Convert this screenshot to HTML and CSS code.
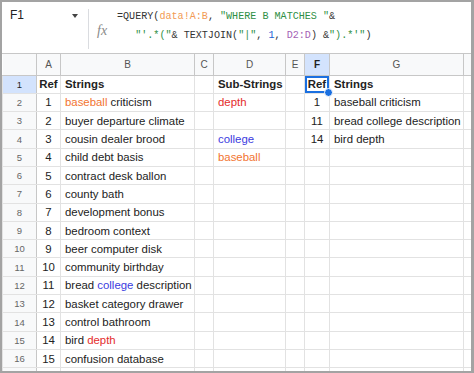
FILE: index.html
```html
<!DOCTYPE html>
<html lang="en">

<head>
    <meta charset="UTF-8">
    <meta name="viewport" content="width=device-width, initial-scale=1.0">
    <title>QUERY matches</title>
    <link rel="stylesheet" href="styles.css">
</head>

<body>
    <div class="frame">
        <div class="sheet">
            <div class="formula-bar">
                <div class="name-box">
                    <span class="cell-ref">F1</span>
                    <span class="caret"></span>
                </div>
                <div class="divider"></div>
                <div class="fx">fx</div>
<pre class="formula">=QUERY(<span class="rng1">data!A:B</span>, <span class="str">"WHERE B MATCHES "</span>&amp;
   <span class="str">"'.*("</span>&amp; TEXTJOIN(<span class="str">"|"</span>, <span class="num">1</span>, <span class="rng2">D2:D</span>) &amp;<span class="str">").*'"</span>)</pre>
            </div>

            <table class="grid">
                <colgroup>
                    <col class="w-head">
                    <col class="w-a">
                    <col class="w-b">
                    <col class="w-c">
                    <col class="w-d">
                    <col class="w-e">
                    <col class="w-f">
                    <col class="w-g">
                    <col class="w-h">
                </colgroup>
                <tr class="col-heads">
                    <th class="corner"></th>
                    <th>A</th>
                    <th>B</th>
                    <th>C</th>
                    <th>D</th>
                    <th>E</th>
                    <th class="active">F</th>
                    <th>G</th>
                    <th></th>
                </tr>
                <tr>
                    <th class="row-num active">1</th>
                    <td class="num-cell bold">Ref</td>
                    <td class="bold">Strings</td>
                    <td></td>
                    <td class="bold">Sub-Strings</td>
                    <td></td>
                    <td class="num-cell bold selected">Ref</td>
                    <td class="bold">Strings</td>
                    <td></td>
                </tr>
                <tr>
                    <th class="row-num">2</th>
                    <td class="num-cell">1</td>
                    <td><span class="orange">baseball</span> criticism</td>
                    <td></td>
                    <td><span class="red">depth</span></td>
                    <td></td>
                    <td class="num-cell">1</td>
                    <td>baseball criticism</td>
                    <td></td>
                </tr>
                <tr>
                    <th class="row-num">3</th>
                    <td class="num-cell">2</td>
                    <td>buyer departure climate</td>
                    <td></td>
                    <td></td>
                    <td></td>
                    <td class="num-cell">11</td>
                    <td>bread college description</td>
                    <td></td>
                </tr>
                <tr>
                    <th class="row-num">4</th>
                    <td class="num-cell">3</td>
                    <td>cousin dealer brood</td>
                    <td></td>
                    <td><span class="blue">college</span></td>
                    <td></td>
                    <td class="num-cell">14</td>
                    <td>bird depth</td>
                    <td></td>
                </tr>
                <tr>
                    <th class="row-num">5</th>
                    <td class="num-cell">4</td>
                    <td>child debt basis</td>
                    <td></td>
                    <td><span class="orange">baseball</span></td>
                    <td></td>
                    <td></td>
                    <td></td>
                    <td></td>
                </tr>
                <tr>
                    <th class="row-num">6</th>
                    <td class="num-cell">5</td>
                    <td>contract desk ballon</td>
                    <td></td><td></td><td></td><td></td><td></td><td></td>
                </tr>
                <tr>
                    <th class="row-num">7</th>
                    <td class="num-cell">6</td>
                    <td>county bath</td>
                    <td></td><td></td><td></td><td></td><td></td><td></td>
                </tr>
                <tr>
                    <th class="row-num">8</th>
                    <td class="num-cell">7</td>
                    <td>development bonus</td>
                    <td></td><td></td><td></td><td></td><td></td><td></td>
                </tr>
                <tr>
                    <th class="row-num">9</th>
                    <td class="num-cell">8</td>
                    <td>bedroom context</td>
                    <td></td><td></td><td></td><td></td><td></td><td></td>
                </tr>
                <tr>
                    <th class="row-num">10</th>
                    <td class="num-cell">9</td>
                    <td>beer computer disk</td>
                    <td></td><td></td><td></td><td></td><td></td><td></td>
                </tr>
                <tr>
                    <th class="row-num">11</th>
                    <td class="num-cell">10</td>
                    <td>community birthday</td>
                    <td></td><td></td><td></td><td></td><td></td><td></td>
                </tr>
                <tr>
                    <th class="row-num">12</th>
                    <td class="num-cell">11</td>
                    <td>bread <span class="blue">college</span> description</td>
                    <td></td><td></td><td></td><td></td><td></td><td></td>
                </tr>
                <tr>
                    <th class="row-num">13</th>
                    <td class="num-cell">12</td>
                    <td>basket category drawer</td>
                    <td></td><td></td><td></td><td></td><td></td><td></td>
                </tr>
                <tr>
                    <th class="row-num">14</th>
                    <td class="num-cell">13</td>
                    <td>control bathroom</td>
                    <td></td><td></td><td></td><td></td><td></td><td></td>
                </tr>
                <tr>
                    <th class="row-num">15</th>
                    <td class="num-cell">14</td>
                    <td>bird <span class="red">depth</span></td>
                    <td></td><td></td><td></td><td></td><td></td><td></td>
                </tr>
                <tr>
                    <th class="row-num">16</th>
                    <td class="num-cell">15</td>
                    <td>confusion database</td>
                    <td></td><td></td><td></td><td></td><td></td><td></td>
                </tr>
                <tr>
                    <th class="row-num"></th>
                    <td></td><td></td><td></td><td></td><td></td><td></td><td></td><td></td>
                </tr>
            </table>
        </div>
    </div>
</body>

</html>
```

FILE: styles.css
```css
* {
    margin: 0;
    padding: 0;
    box-sizing: border-box;
}

body {
    background-color: #a3a3a3;
    font-family: "Liberation Sans", Arial, Helvetica, sans-serif;
}

.frame {
    width: 474px;
    height: 373px;
    padding: 2px 3px 2px 2px;
}

.sheet {
    background-color: #ffffff;
    width: 469px;
    height: 369px;
    overflow: hidden;
}

/* formula bar */
.formula-bar {
    display: flex;
    height: 52px;
    border-bottom: 1px solid #c7c7c7;
}

.name-box {
    width: 86px;
    display: flex;
    align-items: flex-start;
    justify-content: space-between;
    padding: 5px 10px 0 8px;
}

.cell-ref {
    font-size: 12px;
    line-height: 17px;
    color: #222;
}

.caret {
    margin-top: 7px;
    width: 0;
    height: 0;
    border-left: 3px solid transparent;
    border-right: 3px solid transparent;
    border-top: 4px solid #444;
}

.divider {
    width: 1px;
    background-color: #dadce0;
    margin: 7px 0 4px;
}

.fx {
    width: 28px;
    padding: 20px 0 0 8px;
    font-family: "Liberation Serif", "Times New Roman", serif;
    font-style: italic;
    font-size: 14px;
    line-height: 17px;
    color: #8a8a8a;
}

.formula {
    padding-top: 5px;
    font-family: "Liberation Mono", "DejaVu Sans Mono", monospace;
    font-size: 10.1px;
    line-height: 19px;
    color: #333;
}

.formula .rng1 {
    color: #f29a54;
}

.formula .rng2 {
    color: #a45fb5;
}

.formula .str {
    color: #2f8f45;
}

.formula .num {
    color: #2362d4;
}

/* grid */
.grid {
    table-layout: fixed;
    border-collapse: collapse;
    width: 469px;
}

.w-head { width: 34px; }
.w-a { width: 24px; }
.w-b { width: 134px; }
.w-c { width: 19px; }
.w-d { width: 72px; }
.w-e { width: 19px; }
.w-f { width: 25px; }
.w-g { width: 134px; }
.w-h { width: 8px; }

.grid tr {
    height: 18.3px;
}

.grid tr.col-heads {
    height: 21px;
}

.grid th,
.grid td {
    border: 1px solid #e2e2e2;
    white-space: nowrap;
    overflow: hidden;
}

.col-heads th {
    background-color: #f8f9fa;
    border-color: #c7c7c7;
    border-top: none;
    font-weight: normal;
    font-size: 10px;
    color: #555;
}

.col-heads th.corner {
    border-left: none;
}

.row-num {
    background-color: #f8f9fa;
    border-left: none;
    border-right-color: #c7c7c7 !important;
    font-weight: normal;
    font-size: 9.5px;
    color: #666;
}

.grid .active {
    background-color: #d3e3fd;
    color: #1f1f1f;
    font-weight: bold;
}

.grid .row-num.active {
    font-weight: normal;
}

.grid td {
    font-size: 11.4px;
    color: #222;
    padding: 0 3px 0 4px;
    vertical-align: middle;
}

.grid td.num-cell {
    text-align: center;
    padding: 0;
}

.bold {
    font-weight: bold;
}

.selected {
    position: relative;
    box-shadow: inset 0 0 0 2px #1a6fe0;
}

.selected::after {
    content: "";
    position: absolute;
    right: -4px;
    bottom: -4px;
    width: 7px;
    height: 7px;
    border-radius: 50%;
    background-color: #1a6fe0;
    border: 1px solid #fff;
}

.grid td.selected {
    overflow: visible;
}

.orange {
    color: #f2742f;
}

.red {
    color: #e42c2c;
}

.blue {
    color: #3b3be0;
}
```
